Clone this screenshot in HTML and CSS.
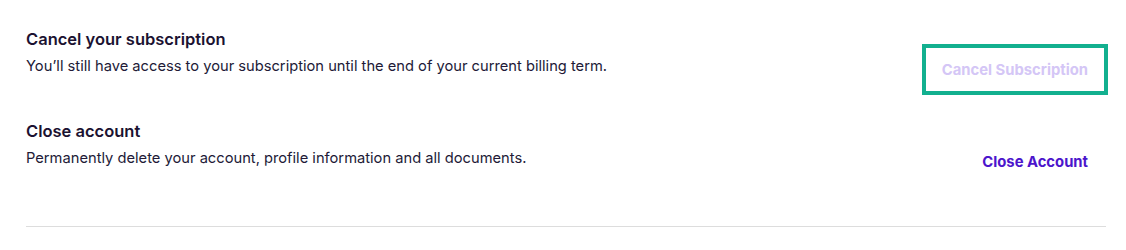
FILE: index.html
```html
<!DOCTYPE html>
<html lang="en">
<head>
    <meta charset="UTF-8" />
    <meta name="viewport" content="width=device-width, initial-scale=1.0" />
    <title>Account settings</title>
    <link rel="stylesheet" href="styles.css">
</head>
<body>
    <div class="settings">
        <div class="setting-row">
            <div class="setting-text">
                <h3 class="setting-title">Cancel your subscription</h3>
                <p class="setting-desc">You’ll still have access to your subscription until the end of your current billing term.</p>
            </div>
            <button type="button" class="link-btn focused" disabled>Cancel Subscription</button>
        </div>
        <div class="setting-row">
            <div class="setting-text">
                <h3 class="setting-title">Close account</h3>
                <p class="setting-desc">Permanently delete your account, profile information and all documents.</p>
            </div>
            <button type="button" class="link-btn">Close Account</button>
        </div>
        <hr class="divider" />
    </div>
</body>
</html>
```

FILE: styles.css
```css
body {
    margin: 0;
    background: #ffffff;
    font-family: Inter, 'Noto Sans', sans-serif;
    color: #1b1231;
}

.settings {
    padding: 27px 20px 0 26px;
}

.setting-row {
    display: flex;
    justify-content: space-between;
    align-items: flex-start;
    margin-bottom: 28px;
}

.setting-title {
    margin: 0 0 4px;
    font-size: 16.5px;
    line-height: 24px;
    font-weight: 600;
}

.setting-desc {
    margin: 0;
    font-size: 14.7px;
    line-height: 22px;
    color: #221a37;
}

.link-btn {
    margin: 21px 2px 0 0;
    height: 43px;
    padding: 0 16px;
    border: none;
    background: none;
    font-family: inherit;
    font-size: 14.8px;
    font-weight: 700;
    color: #4c15cc;
    cursor: pointer;
}

.link-btn:disabled {
    color: #d4c6f6;
    cursor: default;
}

.focused {
    outline: 4px solid #12b08f;
}

.divider {
    margin: 43px 0 0;
    border: none;
    border-top: 1px solid #dddddd;
}
```
